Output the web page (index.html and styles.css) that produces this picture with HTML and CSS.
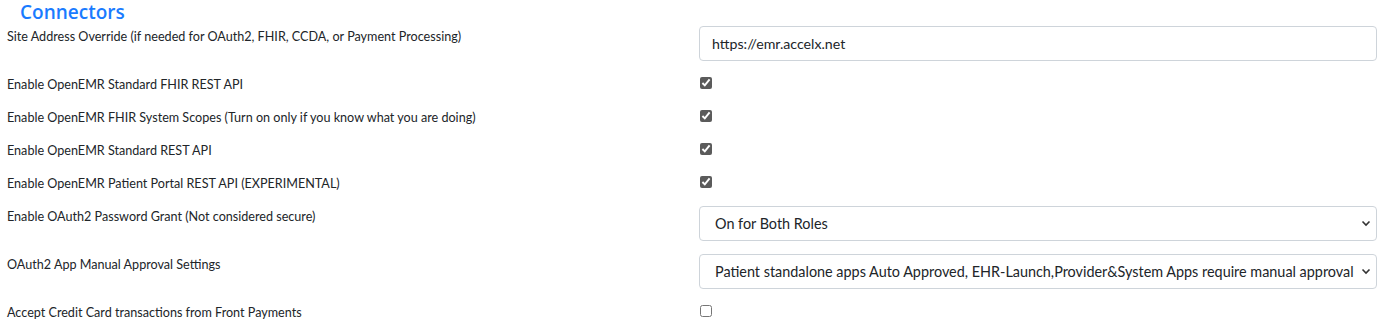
FILE: index.html
```html
<!DOCTYPE html>
<html>
<head>
<meta charset="utf-8">
<link rel="stylesheet" href="styles.css">
</head>
<body>
<div class="page">
  <h2 class="section-title">Connectors</h2>
  <div class="form">
    <div class="row row-input">
      <div class="label">Site Address Override (if needed for OAuth2, FHIR, CCDA, or Payment Processing)</div>
      <div class="control"><input class="text-input" type="text" value="https://emr.accelx.net"></div>
    </div>
    <div class="row row-check">
      <div class="label">Enable OpenEMR Standard FHIR REST API</div>
      <div class="control"><input class="check" type="checkbox" checked></div>
    </div>
    <div class="row row-check">
      <div class="label">Enable OpenEMR FHIR System Scopes (Turn on only if you know what you are doing)</div>
      <div class="control"><input class="check" type="checkbox" checked></div>
    </div>
    <div class="row row-check">
      <div class="label">Enable OpenEMR Standard REST API</div>
      <div class="control"><input class="check" type="checkbox" checked></div>
    </div>
    <div class="row row-check">
      <div class="label">Enable OpenEMR Patient Portal REST API (EXPERIMENTAL)</div>
      <div class="control"><input class="check" type="checkbox" checked></div>
    </div>
    <div class="row row-input">
      <div class="label">Enable OAuth2 Password Grant (Not considered secure)</div>
      <div class="control">
        <div class="select-wrap">
          <select class="select"><option>On for Both Roles</option></select>
          <svg class="chevron" width="10" height="7" viewBox="0 0 10 7"><path d="M1.5 1.5 L5 5 L8.5 1.5" fill="none" stroke="#333" stroke-width="1.6"/></svg>
        </div>
      </div>
    </div>
    <div class="row row-input">
      <div class="label">OAuth2 App Manual Approval Settings</div>
      <div class="control">
        <div class="select-wrap">
          <select class="select"><option>Patient standalone apps Auto Approved, EHR-Launch,Provider&amp;System Apps require manual approval</option></select>
          <svg class="chevron" width="10" height="7" viewBox="0 0 10 7"><path d="M1.5 1.5 L5 5 L8.5 1.5" fill="none" stroke="#333" stroke-width="1.6"/></svg>
        </div>
      </div>
    </div>
    <div class="row row-check">
      <div class="label">Accept Credit Card transactions from Front Payments</div>
      <div class="control"><input class="check" type="checkbox"></div>
    </div>
  </div>
</div>
</body>
</html>
```

FILE: styles.css
```css
html, body {
  margin: 0;
  padding: 0;
  background: #ffffff;
}

body {
  font-family: "Lato", "Open Sans", "Liberation Sans", sans-serif;
  color: #212529;
}

.page {
  padding: 0 3px 0 7px;
}

.section-title {
  margin: 0;
  padding: 0 0 0 13px;
  font-family: "Open Sans", "Noto Sans", sans-serif;
  font-size: 19px;
  font-weight: 600;
  line-height: 24px;
  color: #1a7bff;
}

.form {
  display: flex;
  flex-direction: column;
  gap: 13px;
  padding-top: 2px;
}

.row {
  display: grid;
  grid-template-columns: 692px 1fr;
  align-items: start;
}

.label {
  font-size: 12.6px;
  line-height: 20px;
  padding-top: 1px;
}

.row-check {
  height: 20px;
}

.control {
  min-width: 0;
}

.text-input,
.select {
  box-sizing: border-box;
  width: 100%;
  height: 35px;
  margin: 0;
  border: 1px solid #ced4da;
  border-radius: 4px;
  background: #ffffff;
  font-family: "Lato", "Open Sans", sans-serif;
  font-size: 14.2px;
  color: #212529;
  outline: none;
}

.text-input {
  padding: 0 12px;
}

.select-wrap {
  position: relative;
}

.select {
  appearance: none;
  -webkit-appearance: none;
  font-size: 14.4px;
  padding: 0 22px 0 15px;
}

.chevron {
  position: absolute;
  right: 6px;
  top: 14px;
  pointer-events: none;
}

.check {
  display: block;
  margin: 3px 0 0 1px;
  width: 12px;
  height: 12px;
  accent-color: #5b5b5b;
}
```
